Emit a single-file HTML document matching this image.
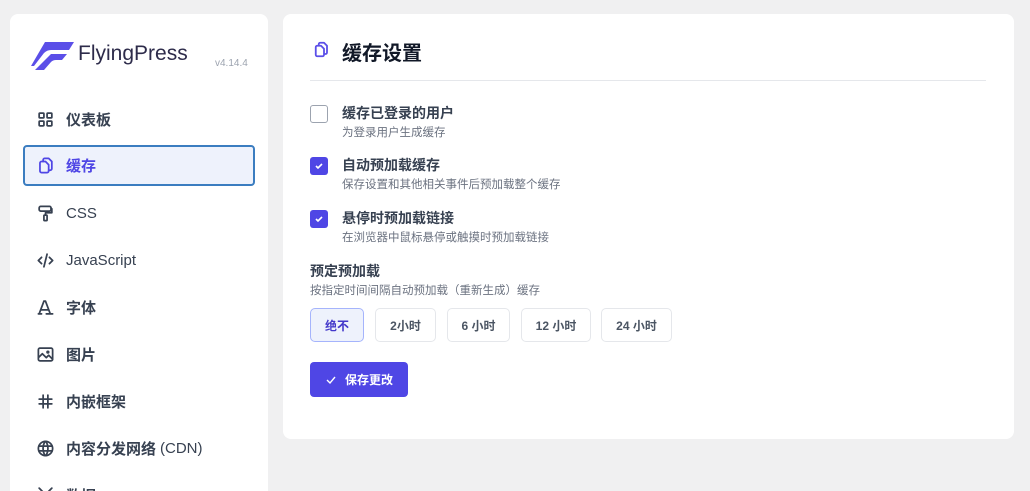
<!DOCTYPE html>
<html><head><meta charset="utf-8"><style>
*{margin:0;padding:0;box-sizing:border-box}
html,body{width:1030px;height:491px;overflow:hidden}
body{background:#f0f0f1;font-family:"Liberation Sans","Noto Sans CJK SC",sans-serif;position:relative;color:#1f2937}
.card{position:absolute;background:#fff;border-radius:8px}
.nav{position:absolute;left:23px;width:232px;height:41px;display:flex;align-items:center;padding-left:13px;font-size:15px;font-weight:700;color:#374151;overflow:hidden}
.nav svg{width:19px;height:19px;margin-right:11px;stroke:#374151;fill:none;stroke-width:2.2;stroke-linecap:round;stroke-linejoin:round;flex:none}
.nav.active{border:2px solid #3b7dc0;background:#eef2fc;border-radius:4px;color:#4f46e5;padding-left:11px}
.nav.active svg{stroke:#4f46e5}
.cb{position:absolute;left:310px;width:18px;height:18px;border-radius:3px}
.cb.off{border:1.5px solid #9ca3af}
.cb.on{background:#4f46e5;display:flex;align-items:center;justify-content:center}
.lab{position:absolute;left:342px;font-size:14px;font-weight:700;color:#374151}
.desc{position:absolute;left:342px;font-size:11.5px;color:#6b7280}
.btn{position:absolute;top:308px;height:34px;border:1px solid #e5e7eb;border-radius:5px;font-size:12px;font-weight:700;color:#4b5563;display:flex;align-items:center;justify-content:center}
</style></head><body>
<div class="card" style="left:10px;top:14px;width:258px;height:477px;border-radius:8px 8px 0 0"></div>
<div class="card" style="left:283px;top:14px;width:731px;height:425px"></div>

<svg style="position:absolute;left:31px;top:42px" width="43" height="28" viewBox="0 0 43 28"><path d="M14 0H43L38 8H20Q16 8 13 11L3 24H0Z" fill="#5b4fe8"/><path d="M20 12H36L31 18H25Q22 18 20 20L13 28H4Z" fill="#5b4fe8"/></svg>
<div style="position:absolute;left:78px;top:42px;font-size:21px;color:#2d2b4a">FlyingPress</div>
<div style="position:absolute;left:215px;top:58px;font-size:10px;color:#9ca3af">v4.14.4</div>

<div class="nav" style="top:99px"><svg viewBox="0 0 24 24"><rect x="4" y="4" width="6" height="6" rx="1"/><rect x="14" y="4" width="6" height="6" rx="1"/><rect x="4" y="14" width="6" height="6" rx="1"/><rect x="14" y="14" width="6" height="6" rx="1"/></svg>仪表板</div>
<div class="nav active" style="top:145px"><svg viewBox="0 0 24 24"><path d="M9 7V5a2 2 0 012-2h5l4 4v9a2 2 0 01-2 2h-2"/><path d="M5 9a2 2 0 012-2h5l4 4v8a2 2 0 01-2 2H7a2 2 0 01-2-2z"/></svg>缓存</div>
<div class="nav" style="top:193px"><svg viewBox="0 0 24 24"><rect x="4" y="3" width="15" height="6" rx="2"/><path d="M19 6h1v5h-8v3"/><rect x="10" y="14" width="4" height="7" rx="1"/></svg><span style="font-weight:400">CSS</span></div>
<div class="nav" style="top:240px"><svg viewBox="0 0 24 24"><path d="M7 8l-4 4 4 4M17 8l4 4-4 4M14 4l-4 16"/></svg><span style="font-weight:400">JavaScript</span></div>
<div class="nav" style="top:287px"><svg viewBox="0 0 24 24"><path d="M3 20h4M13 20h8M7 15h9M10 4h2l6 16M10 4L4 20M12 4l-2 0"/></svg>字体</div>
<div class="nav" style="top:334px"><svg viewBox="0 0 24 24"><rect x="3" y="4" width="18" height="16" rx="2"/><path d="M3 16l5-5 5 5 3-3 5 5"/><circle cx="15" cy="9" r="1"/></svg>图片</div>
<div class="nav" style="top:381px"><svg viewBox="0 0 24 24"><path d="M4 9h16M4 15h16M9 4v16M15 4v16"/></svg>内嵌框架</div>
<div class="nav" style="top:428px"><svg viewBox="0 0 24 24"><circle cx="12" cy="12" r="9"/><path d="M3.6 9h16.8M3.6 15h16.8M11.5 3a17 17 0 000 18M12.5 3a17 17 0 010 18"/></svg>内容分发网络 <span style="font-weight:400;margin-left:4px">(CDN)</span></div>
<div class="nav" style="top:475px;height:16px;align-items:flex-start;padding-top:10px"><svg viewBox="0 0 24 24"><path d="M4 4l8 8 8-8"/></svg>数据</div>

<svg style="position:absolute;left:312px;top:40px" width="18" height="19" viewBox="0 0 24 24" fill="none" stroke="#5b4fe8" stroke-width="2.4" stroke-linejoin="round"><path d="M9 7V5a2 2 0 012-2h5l4 4v9a2 2 0 01-2 2h-2"/><path d="M5 9a2 2 0 012-2h5l4 4v8a2 2 0 01-2 2H7a2 2 0 01-2-2z"/></svg>
<div style="position:absolute;left:342px;top:37px;font-size:20px;font-weight:700;color:#111827">缓存设置</div>
<div style="position:absolute;left:310px;top:80px;width:676px;height:1px;background:#e5e7eb"></div>

<div class="cb off" style="top:105px"></div>
<div class="lab" style="top:103px">缓存已登录的用户</div>
<div class="desc" style="top:124px">为登录用户生成缓存</div>
<div class="cb on" style="top:157px"><svg width="10" height="10" viewBox="0 0 10 10"><path d="M2 5l2 2 4-4" stroke="#fff" stroke-width="1.6" fill="none"/></svg></div>
<div class="lab" style="top:155px">自动预加载缓存</div>
<div class="desc" style="top:176px">保存设置和其他相关事件后预加载整个缓存</div>
<div class="cb on" style="top:210px"><svg width="10" height="10" viewBox="0 0 10 10"><path d="M2 5l2 2 4-4" stroke="#fff" stroke-width="1.6" fill="none"/></svg></div>
<div class="lab" style="top:208px">悬停时预加载链接</div>
<div class="desc" style="top:229px">在浏览器中鼠标悬停或触摸时预加载链接</div>

<div class="lab" style="left:310px;top:261px">预定预加载</div>
<div class="desc" style="left:310px;top:282px">按指定时间间隔自动预加载（重新生成）缓存</div>

<div class="btn" style="left:310px;width:54px;background:#eef2fc;border-color:#a5b4fc;color:#4338ca">绝不</div>
<div class="btn" style="left:375px;width:61px">2小时</div>
<div class="btn" style="left:447px;width:63px">6 小时</div>
<div class="btn" style="left:521px;width:70px">12 小时</div>
<div class="btn" style="left:601px;width:71px">24 小时</div>

<div style="position:absolute;left:310px;top:362px;width:98px;height:35px;background:#4f46e5;border-radius:4px;color:#fff;font-size:12px;font-weight:700;display:flex;align-items:center;padding-left:15px"><svg width="12" height="12" viewBox="0 0 12 12" style="margin-right:8px"><path d="M2 6l3 3 5-6" stroke="#fff" stroke-width="1.4" fill="none"/></svg>保存更改</div>
</body></html>
